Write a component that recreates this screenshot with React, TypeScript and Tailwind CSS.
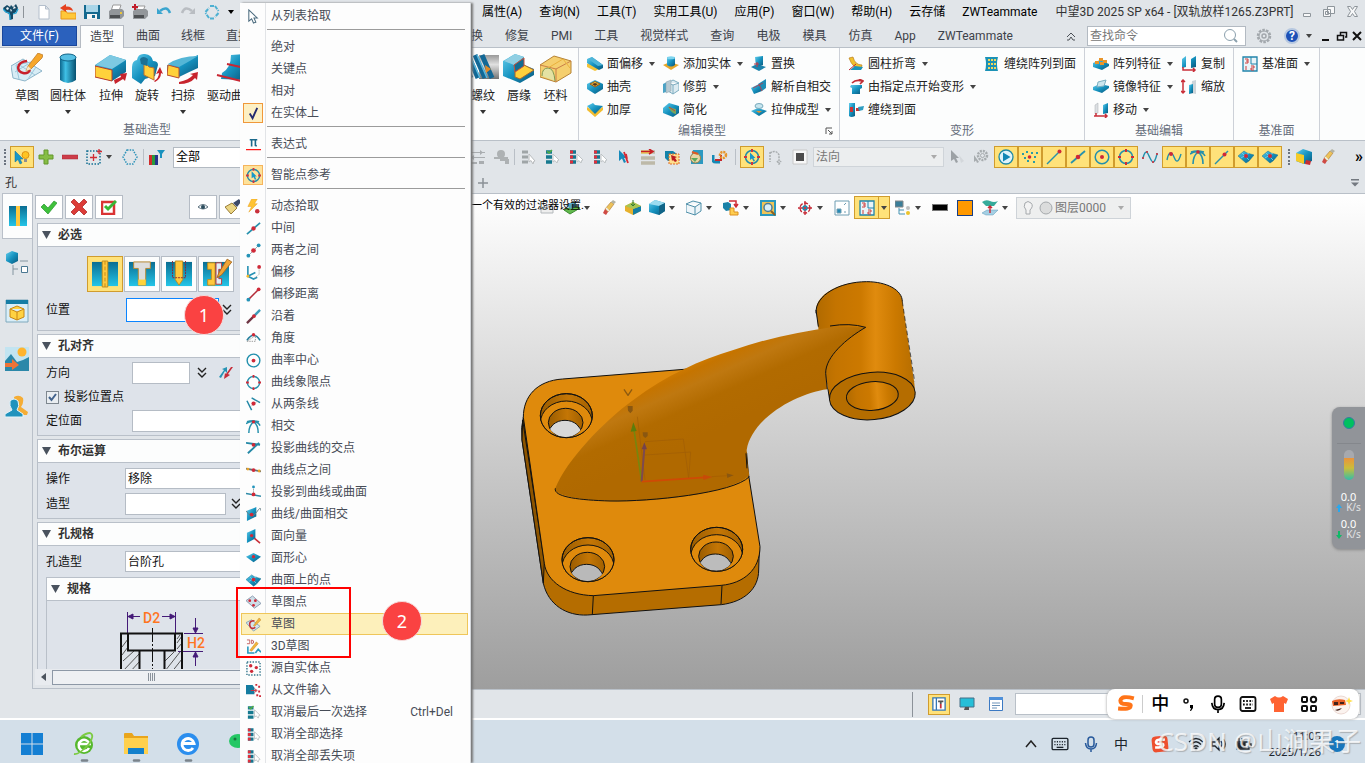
import type { ReactNode } from 'react';

// 16x16 glyphs shared by the toolbars, the ribbon and the pick menu
const glyphs: Record<string, ReactNode> = {
  logo: (
    <g>
      <path d="M0 4 4 1 7 3 8 1 10 3 13 0 15 4 13 8 10 10V15L7 16 6 10 2 8Z" fill="#174a66" />
      <path d="M4 3 6 4 5 6 3 5ZM11 2 13 4 10 5ZM7 5 9 6 8 8Z" fill="#f3f7f9" />
      <path d="M0 5 3 8 6 9 7 12V16M15 5 13 9 10 10" fill="none" stroke="#21a4d6" strokeWidth="1.300" />
    </g>
  ),
  page: <path d="M3 1.500H9.500L13 5V15H3ZM9.500 1.500V5H13" fill="#fff" stroke="#b4bfcc" />,
  open: (
    <g>
      <path d="M1 7H6L7 9H16V15H1Z" fill="#ffc839" stroke="#e8961b" />
      <path d="M0 4 6 0V2.500Q12 2 13 7 9 5 6 6V8Z" fill="#e5401e" />
    </g>
  ),
  save: (
    <g>
      <path d="M0 1H16V15H0Z" fill="#14698f" />
      <path d="M2 1H14V8H2Z" fill="#a9d5e8" />
      <path d="M3 10H13V15H3Z" fill="#f5f5f5" />
      <path d="M8 11H11V14H8Z" fill="#14698f" />
    </g>
  ),
  print: (
    <g>
      <path d="M5 1H13L11 7H3Z" fill="#fff" stroke="#999" />
      <path d="M1 7 4 5H14L16 7V12L13 15H1Z" fill="#92969a" />
      <path d="M2 11H12V14H2Z" fill="#4d5053" />
      <path d="M12 8H14V10H12Z" fill="#e9c63c" />
    </g>
  ),
  printPlus: (
    <g>
      <path d="M6 2H13L11 7H4Z" fill="#fff" stroke="#999" />
      <path d="M1 7 4 5H14L16 7V12L13 15H1Z" fill="#92969a" />
      <path d="M2 11H12V14H2Z" fill="#4d5053" />
      <path d="M3 0V6M0 3H6" stroke="#c11d2b" strokeWidth="2" />
    </g>
  ),
  undo: (
    <g>
      <path d="M4 7Q11 1 14 9" fill="none" stroke="#3aa5cf" strokeWidth="2.500" />
      <path d="M1 4V10H7Z" fill="#3aa5cf" />
    </g>
  ),
  redo: (
    <g>
      <path d="M12 7Q5 1 2 9" fill="none" stroke="#b9bdc2" strokeWidth="2.500" />
      <path d="M15 4V10H9Z" fill="#b9bdc2" />
    </g>
  ),
  rotateBox: (
    <g fill="none" stroke="#4db0d2" strokeWidth="2">
      <path d="M1.500 8 5 4M6 2H11M11 2 14.500 7M14.500 9 11 13M10 14.500H5M5 14 1.500 9" strokeDasharray="4 1" />
    </g>
  ),
  pickBulb: (
    <g>
      <path d="M1 2V13L4 10.500 6 15 8 14 6 10H9Z" fill="#1798c8" stroke="#0f6f98" strokeWidth=".5" />
      <circle cx="11.500" cy="6" r="3.500" fill="#ffc421" stroke="#df9313" />
      <path d="M10 10H13V13H10Z" fill="#8f8f8f" />
    </g>
  ),
  plus: <path d="M6 1H10V6H15V10H10V15H6V10H1V6H6Z" fill="#86bd45" stroke="#62972c" />,
  minus: <path d="M0 6H16V10H0Z" fill="#cd3c49" stroke="#a82936" strokeWidth=".5" />,
  marquee: (
    <g fill="none">
      <path d="M1 2H14V15H1Z" stroke="#156f93" strokeDasharray="1.500 1.500" strokeWidth="1.500" />
      <path d="M7.500 5V12M4 8.500H11M13 0V5M11 2.500H16" stroke="#d12d35" strokeWidth="1.300" />
    </g>
  ),
  hexagon: <path d="M5 1H11L15 8 11 15H5L1 8Z" fill="none" stroke="#2b91b8" strokeWidth="1.500" strokeDasharray="1.500 1.200" />,
  filter: (
    <g>
      <path d="M0 6H3V16H0Z" fill="#d02c2c" />
      <path d="M3 6H6V16H3Z" fill="#2a9a3c" />
      <path d="M6 6H9V16H6Z" fill="#27348b" />
      <path d="M8 1H16L13 5V9H11V5Z" fill="#1992bf" />
    </g>
  ),
  listGrey: (
    <g>
      <path d="M2 3H8M2 8H8M2 13H8" stroke="#9fa5a7" strokeWidth="3" />
      <path d="M9 5V13L11 11.500 13 15 14 12H15Z" fill="#fff" stroke="#b9bcbe" />
    </g>
  ),
  listTeal: (
    <g>
      <path d="M2 3H8M2 8H8M2 13H8" stroke="#16798f" strokeWidth="3.500" />
      <path d="M3 2 5 4 8 1" stroke="#52ad45" fill="none" strokeWidth="1.500" />
      <path d="M9 5V13L11 11.500 13 14 14 11H15Z" fill="#fff" stroke="#bec3c5" />
    </g>
  ),
  listRed: (
    <g>
      <path d="M2 3H8M2 8H8M2 13H8" stroke="#17758f" strokeWidth="3.500" />
      <path d="M2 3H5M2 8H5M2 13H5" stroke="#e0303c" strokeWidth="3" />
      <path d="M9 5V13L11 11.500 13 14 14 11H15Z" fill="#fff" stroke="#bec3c5" />
    </g>
  ),
  cursorRed: (
    <g>
      <path d="M3 1V12L6 9.500 8 14 10 13 8 9H11Z" fill="#168abb" />
      <path d="M8 3 12 14M10 5 11 10" stroke="#d72b35" strokeWidth="1.800" />
    </g>
  ),
  layers: (
    <g>
      <path d="M1 3H15M1 9H15M1 14H15" stroke="#bdb9a8" strokeWidth="3.500" />
      <path d="M1 3H12" stroke="#f1d34f" strokeWidth="3" />
      <path d="M1 2.500H12M9 0 13 2.500 9 5" stroke="#c72026" fill="none" strokeWidth="1.500" />
    </g>
  ),
  boxPick: (
    <g>
      <path d="M1 2H9L13 5V12H4L1 9Z" fill="#1383aa" />
      <path d="M5 5H15V15H5Z" fill="#ffdf8d" stroke="#e06b24" strokeDasharray="2 1" />
      <path d="M7 6 13 8 11 9 13 12 11 13 9 11 8 12Z" fill="#ba1c23" />
    </g>
  ),
  palette: (
    <g>
      <path d="M5 1H15V15H3V8Z" fill="#2c99c1" />
      <circle cx="7.500" cy="9" r="5" fill="#e7d5a5" stroke="#9c8347" />
      <path d="M3 9H10L7 13Z" fill="#5ca85d" />
      <path d="M4 3 10 5" stroke="#df5b23" strokeWidth="2" />
    </g>
  ),
  gearArrow: (
    <g fill="none">
      <path d="M1 6V11Q1 13 4 13H8" stroke="#1589b5" strokeWidth="3" />
      <path d="M3 11H9V6" stroke="#c7282c" strokeWidth="2" />
      <circle cx="11" cy="6" r="3" stroke="#e7962a" strokeWidth="2.500" strokeDasharray="2 .800" />
    </g>
  ),
  smartPick: (
    <g>
      <circle cx="8" cy="8" r="6.500" fill="none" stroke="#1e8bac" strokeWidth="1.500" />
      <path d="M8 0V3M8 13V16M0 8H3M13 8H16" stroke="#cf3540" strokeWidth="2" />
      <path d="M6 3.500V11L8 9.500 9.500 12.500 11 12 9.500 9H11.500Z" fill="#1798c8" />
    </g>
  ),
  hookGrey: <path d="M2 3V13M2 4Q8 0 11 6V14M9 12 11 15 13 12" fill="none" stroke="#a8adaf" strokeWidth="1.500" strokeDasharray="2 1" />,
  squareDark: (
    <g>
      <path d="M1 1H15V15H1Z" fill="#f7f7f7" stroke="#c8c8c8" />
      <path d="M4 4H12V12H4Z" fill="#4c4c4c" />
    </g>
  ),
  cursorGrey: (
    <g>
      <path d="M2 1V12L5 10 7 14 9 13 7 9H10Z" fill="#9ca1a5" />
      <path d="M10 6 15 12 12 14Z" fill="#d3d7db" />
    </g>
  ),
  gearGrey: (
    <g fill="none">
      <circle cx="9.500" cy="6.500" r="4.500" stroke="#a7acaf" strokeWidth="2.500" strokeDasharray="2 1" />
      <circle cx="9.500" cy="6.500" r="2" stroke="#a7acaf" />
      <path d="M1 6V13L3 11.500 4 14 6 13Z" fill="#a7acaf" />
    </g>
  ),
  play: (
    <g>
      <circle cx="8" cy="8" r="7" fill="#dff3fa" stroke="#1f89a7" strokeWidth="1.300" />
      <path d="M5 3.500 12.500 8 5 12.500Z" fill="#1187b5" />
    </g>
  ),
  points: (
    <g fill="#299ba6">
      <path d="M0 4H2V6H0ZM4 2H6V4H4ZM9 3H11V5H9ZM14 3H16V5H14ZM2 8H4V10H2ZM12 7H14V9H12ZM5 11H7V13H5ZM11 12H13V14H11Z" />
      <circle cx="7.500" cy="8" r="1.800" fill="#cf2938" />
    </g>
  ),
  lineEnd: (
    <g>
      <path d="M1 15 14 2" stroke="#2991a9" strokeWidth="1.500" />
      <circle cx="13.500" cy="2.500" r="2" fill="#cf2938" />
    </g>
  ),
  lineMid: (
    <g>
      <path d="M1 14 15 2" stroke="#2791ad" strokeWidth="1.800" />
      <circle cx="8" cy="8" r="2.300" fill="#cf2938" />
    </g>
  ),
  lineOn: (
    <g>
      <path d="M1 15 14 2" stroke="#2991a9" strokeWidth="1.500" />
      <circle cx="10.500" cy="5.500" r="2" fill="#cf2938" />
    </g>
  ),
  circleCenter: (
    <g>
      <circle cx="8" cy="8" r="6.800" fill="none" stroke="#2290ad" strokeWidth="1.500" />
      <circle cx="8" cy="8" r="2" fill="#cf2938" />
    </g>
  ),
  quadrant: (
    <g>
      <circle cx="8" cy="8" r="6.500" fill="none" stroke="#2290ad" strokeWidth="1.500" />
      <path d="M7 0H9V3H7ZM7 13H9V16H7ZM0 7H3V9H0ZM13 7H16V9H13Z" fill="#cf2938" />
    </g>
  ),
  wave: (
    <g>
      <path d="M1 9C4-2 6 5 8 9S12 17 15 5" fill="none" stroke="#2290ad" strokeWidth="1.400" />
      <path d="M0 8H2V10H0ZM4 2H6V4H4ZM10 12H12V14H10ZM14 4H16V6H14Z" fill="#b94a57" />
    </g>
  ),
  curve: (
    <g>
      <path d="M1 11C3 1 6 3 8 8S12 15 15 5" fill="none" stroke="#2290ad" strokeWidth="1.400" />
      <circle cx="5" cy="5" r="2" fill="#cf2938" />
    </g>
  ),
  tangent: (
    <g>
      <path d="M0 5Q5 2 8 3 13 3 15 7M1 3Q7 1 14 3M3 15Q3 7 8 3 13 6 13 15" fill="none" stroke="#2791ad" strokeWidth="1.600" />
      <circle cx="8" cy="3" r="1.800" fill="#cf2938" />
    </g>
  ),
  surfPoint: (
    <g>
      <path d="M0 7 6 2 9 4 16 6 11 12 8 14Z" fill="url(#cyan)" stroke="#12708f" strokeWidth=".5" />
      <path d="M4 4 11 11M3 9 11 4" stroke="#7cd4ee" strokeWidth=".8" />
      <circle cx="8" cy="7" r="2" fill="#cf2938" />
    </g>
  ),
  surface: (
    <g>
      <path d="M0 6 8 2 16 6 8 12Z" fill="url(#cyan)" />
      <circle cx="8" cy="6" r="1.800" fill="#cf2938" />
    </g>
  ),
  cubeGold: (
    <g>
      <path d="M0 4 7 0 16 3V12L8 15 0 12Z" fill="url(#cyan)" />
      <path d="M0 4 8 6V15L0 12Z" fill="#f5cb28" />
      <path d="M10 11 15 12 14 16 9 15Z" fill="#c92c31" />
    </g>
  ),
  pencil: (
    <g>
      <path d="M4 9 10 2 13 4 7 12Z" fill="#edc35a" stroke="#aa7735" strokeWidth=".6" />
      <path d="M4 9 7 12 5 15 2 13Z" fill="#cf4a44" />
      <path d="M5 8 8 11" stroke="#eee" strokeWidth="1.500" />
      <path d="M10 2 12 0 15 2 13 4Z" fill="#b3b3a4" />
    </g>
  ),
  cursor: <path d="M3 1V13L6 10.500 8 15 10.500 14 8.500 9.500H12Z" fill="#fff" stroke="#4b6b7e" strokeWidth="1.100" />,
  check: <path d="M4 8 7 13 12 2" fill="none" stroke="#252c70" strokeWidth="2" />,
  pi: (
    <g fill="none">
      <path d="M4 3H12M6 3V10M10 3V9L11.500 9.500" stroke="#1c6a8b" strokeWidth="1.700" />
      <path d="M0 13.500H16" stroke="#f00" strokeWidth="1.200" />
    </g>
  ),
  bolt: (
    <g>
      <path d="M6 0H12L9 5H12L3 14 6 8H2Z" fill="#ffc332" stroke="#e69c20" strokeWidth=".5" />
      <circle cx="12" cy="13" r="2.400" fill="#c9303b" />
    </g>
  ),
  between: (
    <g>
      <path d="M2 14 14 2" stroke="#90a9b0" />
      <circle cx="2.500" cy="13.500" r="2" fill="#2493b7" />
      <circle cx="8" cy="8" r="2.500" fill="#cf2938" />
      <circle cx="13.500" cy="2.500" r="2" fill="#2493b7" />
    </g>
  ),
  offset: (
    <g fill="none">
      <path d="M2 1V12L8 15 12 13M2 12 10 8" stroke="#2590b3" strokeWidth="1.700" />
      <path d="M14 3V10L9 14" stroke="#999" strokeDasharray="1 1" />
      <circle cx="14" cy="2" r="2" fill="#cf2938" />
      <circle cx="2" cy="12" r="1.500" fill="#efb62b" />
    </g>
  ),
  offsetDist: (
    <g>
      <path d="M2 14 14 2" stroke="#b32c39" strokeWidth="1.600" />
      <circle cx="2.500" cy="13.500" r="2" fill="#2493b7" />
      <circle cx="13.500" cy="2.500" r="2" fill="#cf2938" />
    </g>
  ),
  along: (
    <g>
      <path d="M1 15 9 7" stroke="#6f3644" strokeWidth="2.500" />
      <path d="M9 7 15 1" stroke="#3d9cb9" strokeWidth="2.500" />
      <circle cx="8.500" cy="7.500" r="2" fill="#cf2938" />
    </g>
  ),
  angle: (
    <g fill="none">
      <path d="M1 10Q8-1 15 10" stroke="#267f9c" strokeWidth="1.800" />
      <path d="M1 11H10V5Z" stroke="#999" strokeDasharray="1.500 1" />
      <circle cx="8" cy="4" r="1.800" fill="#cf2938" />
    </g>
  ),
  twoLines: (
    <g>
      <path d="M1 4 6 14M6 1 15 6" stroke="#2488a6" strokeWidth="1.600" />
      <path d="M5 10 13 4" stroke="#999" strokeDasharray="1 1" />
      <circle cx="8" cy="7" r="2.200" fill="#cf2938" />
    </g>
  ),
  project: (
    <g>
      <path d="M0 2 15 4M14 2 2 13" stroke="#2488a6" strokeWidth="2" />
      <circle cx="8" cy="4" r="2" fill="#cf2938" />
    </g>
  ),
  segment: (
    <g>
      <path d="M0 6 16 9" stroke="#627278" strokeWidth="2" />
      <circle cx="2" cy="6.500" r="1.500" fill="#e9a329" />
      <circle cx="8" cy="7.500" r="2" fill="#cf2938" />
      <circle cx="14" cy="8.500" r="1.500" fill="#e9a329" />
    </g>
  ),
  dropTo: (
    <g>
      <path d="M0 9 16 12" stroke="#2f8ba7" strokeWidth="1.700" />
      <path d="M8 2V10" stroke="#777" strokeDasharray="1 1" />
      <circle cx="8" cy="2" r="1.500" fill="#2294bc" />
      <circle cx="8" cy="10" r="2" fill="#cf2938" />
    </g>
  ),
  planeCurve: (
    <g>
      <path d="M1 4 11 0V10L1 15Z" fill="url(#cyan)" />
      <path d="M0 4Q6 14 11 6T16 4" fill="none" stroke="#647e86" />
      <circle cx="6" cy="8" r="2" fill="#cf2938" />
    </g>
  ),
  planeVec: (
    <g>
      <path d="M1 4 10 0V10L1 15Z" fill="url(#cyan)" />
      <path d="M9 10 15 15" stroke="#c92e39" strokeWidth="1.700" />
      <circle cx="6" cy="7" r="1.800" fill="#cf2938" />
    </g>
  ),
  sketchPts: (
    <g>
      <path d="M0 6 7 1 16 9 9 14Z" fill="#cfdde7" stroke="#8b9cb0" />
      <circle cx="4" cy="6" r="1.500" fill="#cf2938" />
      <circle cx="10" cy="6" r="1.500" fill="#cf2938" />
      <circle cx="8" cy="11" r="1.500" fill="#cf2938" />
    </g>
  ),
  sketch: (
    <g>
      <path d="M0 6 6 3 15 10 8 15Z" fill="#d4e5ee" stroke="#89a4b4" />
      <path d="M9 4Q3 4 4 9T10 11" fill="none" stroke="#c2313a" strokeWidth="1.700" />
      <path d="M8 9 14 1 16 3 9 10Z" fill="#f4b43a" stroke="#b88222" strokeWidth=".5" />
    </g>
  ),
  sketch3d: (
    <g>
      <path d="M2 8V15H9M10 15 13 11 16 14" fill="none" stroke="#2698be" strokeWidth="1.700" />
      <path d="M4 12 11 3 13 5 6 13Z" fill="#f4b43a" stroke="#b88222" strokeWidth=".5" />
      <path d="M1 1H4V5H1M6 1V5Q9 5 8 2Z" fill="none" stroke="#c56363" />
    </g>
  ),
  fromEntity: (
    <g>
      <path d="M1 1H15V15H1Z" fill="none" stroke="#36788d" strokeWidth="1.500" strokeDasharray="1.500 1.500" />
      <circle cx="5" cy="5" r="1.800" fill="#cf2938" />
      <circle cx="11" cy="7" r="1.800" fill="#cf2938" />
      <circle cx="6" cy="11" r="1.800" fill="#cf2938" />
    </g>
  ),
  fromFile: (
    <g>
      <path d="M0 2H7L9 5V12H0Z" fill="#157ca0" />
      <path d="M5 8H11M9 6 12 8 9 10" fill="none" stroke="#cb3440" />
      <path d="M10 1H12V3H10ZM13 3H15V5H13ZM13 8H15V10H13ZM11 12H13V14H11ZM14 13H16V15H14Z" fill="#cf2938" />
    </g>
  ),
  faceOffset: (
    <g>
      <path d="M0 8 7 4 16 11 8 15 0 11Z" fill="#f4c337" />
      <path d="M0 3 5 1 16 9V12L12 14 0 7Z" fill="url(#cyan)" />
      <path d="M5 1 16 9 11 10 1 3Z" fill="#4fb5d8" />
    </g>
  ),
  shell: (
    <g>
      <path d="M0 5 8 1 16 5V10L8 15 0 10Z" fill="url(#cyan)" />
      <path d="M3 5 8 2.500 13 5 8 8Z" fill="#f7cf43" stroke="#9a5b17" />
      <path d="M5 5 8 4 11 5 8 7Z" fill="#57321a" />
    </g>
  ),
  thicken: (
    <g>
      <path d="M0 5 8 10 16 5V8L8 15 0 8Z" fill="#f2bd31" />
      <path d="M0 4 6 1 8 3 16 4 8 12Z" fill="url(#cyan)" />
    </g>
  ),
  addSolid: (
    <g>
      <path d="M0 9 7 6 16 9 8 14Z" fill="#e7a72a" />
      <path d="M4 1H12V9Q8 12 4 9Z" fill="url(#cyan)" />
      <ellipse cx="8" cy="1.800" rx="4" ry="1.500" fill="#7ed4ee" />
    </g>
  ),
  trim: (
    <g>
      <path d="M0 5 6 2V12L0 14Z" fill="#4aa3c6" />
      <path d="M5 4 10 1 16 4V11L10 15 5 12ZM5 4 10 6 16 4M10 6V15" fill="#dcebf1" stroke="#7dacbf" />
      <path d="M3 3 8 1V12L3 14Z" fill="#b7c9d1" stroke="#8aa3ad" strokeWidth=".5" />
    </g>
  ),
  simplify: (
    <g>
      <path d="M0 6 6 1 16 4V11L10 15 0 11Z" fill="url(#cyan)" />
      <path d="M5 5 13 7V12Q9 12 5 5Z" fill="#79a55d" />
      <path d="M6 5 12 9" stroke="#bf493e" />
    </g>
  ),
  replace: (
    <g>
      <path d="M0 11 6 8 15 11 8 15Z" fill="#1c82ab" />
      <path d="M4 1 12 0V9L5 11Z" fill="url(#cyan)" />
      <path d="M3 8H8M6 6V11" stroke="#c53441" />
    </g>
  ),
  selfX: (
    <g>
      <path d="M7 5 15 0V9L11 12Z" fill="#1f8db5" />
      <path d="M0 9 8 5 11 12 3 15Z" fill="url(#cyan)" />
      <path d="M2 9 12 4M8 5 11 12" stroke="#c53441" strokeWidth=".8" />
    </g>
  ),
  extrudeForm: (
    <g>
      <path d="M0 9 7 6 16 9 8 14Z" fill="url(#cyan)" />
      <ellipse cx="8" cy="4" rx="4" ry="2.500" fill="#c7e6ef" stroke="#78a9bb" />
      <path d="M5 9H11L8 11Z" fill="#df9331" />
    </g>
  ),
  bend: (
    <g>
      <path d="M1 2 5 1Q7 9 14 9L13 13Q5 13 1 2Z" fill="#f2c12d" stroke="#b97c1c" strokeWidth=".7" />
      <path d="M2 14 7 10 15 11 13 14Z" fill="#1b93bb" />
      <path d="M1 14 8 8" fill="none" stroke="#c42a33" />
    </g>
  ),
  morph: (
    <g>
      <path d="M3 6H14V9L12 10V15H4V9L2 8Z" fill="url(#cyan)" />
      <path d="M4 4Q8 0 14 2M11 0 15 2 12 5" fill="none" stroke="#c12e36" strokeWidth="1.700" />
    </g>
  ),
  wrap: (
    <g>
      <path d="M1 1H7V14Q3 16 1 14Z" fill="url(#cyan)" />
      <path d="M2 5H5V10H2ZM8 6H12V9H8Z" fill="#cc3536" />
      <path d="M10 5 16 4 15 8 11 9Z" fill="#2e9cc0" />
    </g>
  ),
  wrapPattern: (
    <g>
      <path d="M1 1H14Q12 8 14 15H1Q3 8 1 1Z" fill="#1b92b6" />
      <path d="M4 3H6V5H4ZM7 3H9V5H7ZM10 3H12V5H10ZM4 7H6V9H4ZM7 7H9V9H7ZM10 7H12V9H10ZM4 11H6V13H4ZM7 11H9V13H7ZM10 11H12V13H10Z" fill="#f2d65d" />
    </g>
  ),
  patternFeat: (
    <g>
      <path d="M0 7 7 4 16 8V10L9 14 0 11Z" fill="url(#cyan)" />
      <path d="M2 5H6V8H2ZM6 2H10V5H6ZM7 6H11V9H7ZM10 4H14V7H10Z" fill="#e8952b" />
    </g>
  ),
  mirrorFeat: (
    <g>
      <path d="M0 8 7 5 16 7V9L9 14 0 11Z" fill="url(#cyan)" />
      <path d="M5 3 13 1 11 7 4 8Z" fill="#cbe6ef" stroke="#7cafc1" />
    </g>
  ),
  move: (
    <g>
      <path d="M2 3 5 1V11L2 12Z" fill="#dce0e3" stroke="#a8adb0" strokeWidth=".5" />
      <path d="M10 3 15 1V11L10 12Z" fill="url(#cyan)" />
      <path d="M1 14H14M3 11V14M12 12 14 14 12 16" fill="none" stroke="#c92e39" strokeWidth="1.500" />
    </g>
  ),
  copy: (
    <g>
      <path d="M1 3 5 0V11L1 12ZM10 3 15 0V11L10 12Z" fill="url(#cyan)" />
      <path d="M2 11V14H14M12 12 14 14 12 16" fill="none" stroke="#c92e39" strokeWidth="1.500" />
    </g>
  ),
  scale: (
    <g>
      <path d="M2 1V14M0 3 2 1 4 3M0 12 2 14 4 12" fill="none" stroke="#c92e39" strokeWidth="1.500" />
      <path d="M11 2 15 1V15L10 14Z" fill="#cdd5da" />
      <path d="M8 6 12 5V14L8 15Z" fill="url(#cyan)" />
    </g>
  ),
  datum: (
    <g fill="none">
      <path d="M1 1H15V15H1Z" fill="#e9f4f8" stroke="#2184aa" strokeWidth="1.300" />
      <path d="M9 1V8H15" stroke="#2184aa" />
      <path d="M3 3H6V7H3M4 5H6M4 10V14M9 10H12V12H9V14H12" stroke="#cf3b3b" />
    </g>
  ),
  padGhost: <path d="M1 9H7V5H13V13H1Z" fill="#eee" stroke="#b3b8bb" />,
  pad: (
    <g>
      <path d="M0 10 10 6 16 8 6 14Z" fill="#62b94c" stroke="#3c8c32" />
      <path d="M2 5 9 2 14 5 7 9Z" fill="#55a4c5" />
    </g>
  ),
  cubeLayer: (
    <g>
      <path d="M0 6 8 2 16 6V11L8 15 0 11Z" fill="#e6b12d" />
      <path d="M8 9 16 6V11L8 15Z" fill="#137ea5" />
      <path d="M0 6 8 2 16 6 8 9Z" fill="#a7c653" />
      <path d="M8 0V6M6 4 8 6 10 4" stroke="#357a32" fill="none" />
    </g>
  ),
  cube: (
    <g>
      <path d="M0 4 6 0 16 3V11L10 15 0 12Z" fill="url(#cyan)" />
      <path d="M0 4 6 0 16 3 10 6Z" fill="#9ddcf0" />
      <path d="M10 6 16 3V11L10 15Z" fill="#106487" />
    </g>
  ),
  cubeWire: <path d="M0 4 7 1 15 3V11L9 15 0 12ZM0 4 9 7 15 3M9 7V15" fill="#eef5f9" stroke="#4f8fa9" />,
  swapView: (
    <g>
      <path d="M0 3 5 2 8 4V10L3 11 0 8Z" fill="#1b82a8" />
      <path d="M6 1H13V6M11 4 13 7 15 4" fill="none" stroke="#cf2d35" strokeWidth="1.500" />
      <path d="M7 8H11V12H15V15H7Z" fill="#ffce50" stroke="#dd9020" />
    </g>
  ),
  zoomBox: (
    <g>
      <path d="M0 0H16V16H0Z" fill="#2a98be" />
      <path d="M2 2H14V14H2Z" fill="#f0c457" />
      <circle cx="8" cy="7.500" r="4" fill="#d8eef7" stroke="#4f7e94" strokeWidth="1.500" />
      <path d="M11 11 15 15" stroke="#8d5f21" strokeWidth="2" />
    </g>
  ),
  target: (
    <g fill="none" stroke="#c52935" strokeWidth="1.300">
      <circle cx="8" cy="8" r="5" strokeDasharray="4 1.500" />
      <path d="M8 1V15M1 8H15" />
      <circle cx="8" cy="8" r="2" stroke="#168bb2" />
    </g>
  ),
  windowBox: (
    <g fill="#fff" stroke="#6f9db2">
      <path d="M1 1H15V15H1Z" />
      <path d="M3 9H7V13H3Z" fill="#2689b4" />
      <path d="M10 5 12 3M10 12H12" />
    </g>
  ),
  tree: (
    <g>
      <path d="M0 1H8V7H0Z" fill="#3b7e99" stroke="#888" />
      <path d="M4 8V14H10M4 10H9" fill="none" stroke="#4693b2" />
      <circle cx="13" cy="8" r="2" fill="#c0c0c0" />
      <circle cx="13" cy="13" r="2" fill="#edc32a" />
    </g>
  ),
  section: (
    <g>
      <path d="M0 2Q4-1 8 1T16 1L12 6H4Z" fill="#37ab9b" />
      <path d="M0 13 5 10H16L11 15H4Z" fill="#a5cfe4" stroke="#5c9ab8" strokeWidth=".5" />
      <path d="M8 6V13M6 8 8 6 10 8" fill="none" stroke="#c92e39" strokeWidth="1.500" />
    </g>
  ),
  slider: (
    <g fill="#a9adb0">
      <path d="M0 3H16V4H0ZM0 8H16V9H0ZM0 13H8V15H0ZM10 12H15V15H10Z" />
      <path d="M11 1 14 3.500 11 6ZM5 6 2 8.500 5 11Z" />
    </g>
  ),
  stamp: (
    <g fill="#adb1b3">
      <circle cx="8" cy="5" r="4" />
      <path d="M1 8H15V10H1ZM7 10H16V15H12V12H7Z" />
    </g>
  ),
  gear: (
    <g fill="none" stroke="#a3a8ad">
      <circle cx="8" cy="8" r="6" strokeWidth="2.500" strokeDasharray="2.500 1.200" />
      <circle cx="8" cy="8" r="5" />
      <circle cx="8" cy="8" r="2" strokeWidth="1.500" />
    </g>
  ),
  swapDir: (
    <g>
      <path d="M1 12 6 5 4 4 9 2 9 8 7 6 3 13Z" fill="#2794b5" />
      <path d="M15 2 10 9 12 10 6 14 7 8 8 9 13 2Z" fill="#c62c38" />
    </g>
  ),
  chevrons: <path d="M4 3 8 7 12 3M4 8 8 12 12 8" fill="none" stroke="#222" strokeWidth="1.400" />,
  eye: (
    <g>
      <path d="M3 8Q8 3 13 8 8 12 3 8Z" fill="#eef4f7" stroke="#5e7380" />
      <circle cx="8" cy="8" r="2" fill="#2b4b5c" />
    </g>
  ),
  mic: <path d="M8 1Q5 1 5 4V8Q5 11 8 11T11 8V4Q11 1 8 1ZM2.500 7Q3 13 8 13T13.500 7M8 13V16" fill="none" stroke="currentColor" strokeWidth="1.500" />,
  keyboard: (
    <g fill="none" stroke="currentColor" strokeWidth="1.200">
      <rect x="1" y="3" width="14" height="10" rx="1" />
      <path d="M3 6H13M3 8.500H13" strokeDasharray="1 1.200" />
      <path d="M5 11H11" />
    </g>
  ),
  sogou: (
    <path d="M15 3Q4 0 3 5 3 8 8 8T12 10Q12 13 1 12" fill="none" stroke="currentColor" strokeWidth="3.500" />
  ),
};

// 32x32 pictures of the large ribbon buttons
const pictures: Record<string, ReactNode> = {
  sketch: (
    <g>
      <path d="M0 13 12 6 31 18 14 28 2 25Z" fill="#d8edf6" stroke="#8db5c9" />
      <path d="M7 11 24 22M8 26 5 12 20 9M17 26 25 14M4 19 17 11" stroke="#9bc7db" fill="none" />
      <path d="M16 8C5 9 5 19 12 20Q17 21 19 17" fill="none" stroke="#c8202b" strokeWidth="2.500" />
      <path d="M17 13 27 0 32 2 31 5 20 16 15 18Z" fill="#f6a72b" stroke="#b67322" strokeWidth=".7" />
      <path d="M17 13 20 16 15 18Z" fill="#f6e4c8" />
    </g>
  ),
  cylinder: (
    <g>
      <path d="M8 4V27Q16 33 24 27V4Z" fill="url(#drum)" />
      <ellipse cx="16" cy="4.500" rx="8" ry="3.500" fill="#55bfe3" stroke="#0f6286" />
    </g>
  ),
  extrude: (
    <g>
      <path d="M0 12 15 2 31 7V19L17 28 0 24Z" fill="url(#cyan)" />
      <path d="M0 13 17 17V28L0 24Z" fill="#ffd23b" stroke="#bb3c2a" />
      <path d="M1 12 15 2 31 7 17 16Z" fill="#7dc9e2" />
      <path d="M19 27 26 24 25 21 32 20 30 28 28 26 20 31Z" fill="#c7242d" />
    </g>
  ),
  revolve: (
    <g>
      <path d="M1 14Q1 8 6 7 7 0 14 1T22 8Q27 8 27 12L24 23 14 26 10 31 1 25Z" fill="url(#cyan)" />
      <path d="M13 9 18 14 23 15V27L13 22Z" fill="#ffd13a" stroke="#bd712d" />
      <path d="M9 6Q12 2 17 6L16 13 10 11Z" fill="#1c7195" />
      <path d="M24 29Q30 26 30 20L32 21 29 14 25 21 28 20Q28 25 23 28Z" fill="#c7242d" />
    </g>
  ),
  sweep: (
    <g>
      <path d="M0 12 17 8 31 2V15Q22 19 12 24L0 22Z" fill="url(#cyan)" />
      <path d="M1 12 12 15V25L0 22Z" fill="#ffd13a" stroke="#bd4c2d" />
      <path d="M1 11Q13 3 31 3 23 8 12 14Z" fill="#54b6d6" />
      <path d="M12 29Q22 27 26 22L23 21 31 19 30 27 28 25Q23 31 12 31Z" fill="#c7242d" />
    </g>
  ),
  drive: (
    <g>
      <path d="M7 20Q16 15 16 2L30 1V27L6 26Z" fill="url(#cyan)" />
      <path d="M2 22 30 29M12 11 30 15" stroke="#c92733" strokeWidth="2" />
    </g>
  ),
  thread: (
    <g>
      <path d="M12 2H32V26H12Z" fill="url(#steel)" />
      <path d="M1 2 11 25M8 2 18 25M15 2 25 25M-5 5 4 25" stroke="#126896" strokeWidth="5" />
      <path d="M3 2 13 25M10 2 20 25" stroke="#57b8de" strokeWidth="1.500" />
      <path d="M18 12 24 16 19 20" fill="#e08a27" />
    </g>
  ),
  lip: (
    <g>
      <path d="M0 8 12 1 21 4V12L31 16V22L17 30 0 23Z" fill="url(#cyan)" />
      <path d="M12 18 21 12 31 17 17 26 12 24Z" fill="#ffd13c" stroke="#a9692c" />
      <path d="M1 8 12 1 21 4 11 12Z" fill="#90cfe3" />
      <path d="M11 12 21 5V13L12 19Z" fill="#146b91" stroke="#cc5138" />
    </g>
  ),
  stock: (
    <g>
      <path d="M0 12 14 3 31 8V20L16 29 0 24Z" fill="#f5cf6e" stroke="#b68335" />
      <path d="M0 12 16 16 31 8M16 16V29" fill="none" stroke="#c97f48" />
      <path d="M2 23Q2 15 8 15T15 28" fill="#e4e2a3" stroke="#7f9a55" />
      <path d="M8 15 23 6 30 15" fill="none" stroke="#e9b13c" />
    </g>
  ),
};

const Glyph = ({ name, className = 'size-4' }: { name: string; className?: string }) => (
  <svg viewBox="0 0 16 16" className={`shrink-0 ${className}`} aria-hidden="true">
    {glyphs[name]}
  </svg>
);

const Caret = ({ className = 'text-[#444]' }: { className?: string }) => (
  <svg viewBox="0 0 6 4" className={`h-1 w-1.5 shrink-0 ${className}`} aria-hidden="true">
    <path d="M0 0H6L3 4Z" fill="currentColor" />
  </svg>
);

const Divider = () => <span className="mx-px h-4 w-px bg-[#b9bfc6]" />;

const Grip = () => <span className="h-4 w-0.5 border-l-2 border-dotted border-[#6c7480]" />;

function ToolButton({ name, active = false }: { name: string; active?: boolean }) {
  return (
    <button
      type="button"
      aria-label={name}
      className={`flex h-[22px] w-6 shrink-0 items-center justify-center ${active ? 'border border-[#d09c2e] bg-[#ffe27a]' : ''}`}
    >
      <Glyph name={name} />
    </button>
  );
}

function TitleRow() {
  const menus = ['属性(A)', '查询(N)', '工具(T)', '实用工具(U)', '应用(P)', '窗口(W)', '帮助(H)', '云存储', 'ZWTeammate'];
  return (
    <header className="flex h-6 items-center">
      <div className="flex w-[482px] shrink-0 items-center pl-[3px]">
        <Glyph name="logo" />
        <span className="mr-3 ml-1 h-3 w-px bg-[#8d9399]" />
        <div className="flex items-center gap-2">
          {['page', 'open', 'save', 'print', 'printPlus', 'undo', 'redo', 'rotateBox'].map((n) => (
            <button type="button" key={n} aria-label={n}>
              <Glyph name={n} />
            </button>
          ))}
          <Caret className="text-black" />
        </div>
      </div>
      <nav className="flex gap-[17px] whitespace-nowrap text-black">
        {menus.map((m) => (
          <button type="button" key={m}>
            {m}
          </button>
        ))}
      </nav>
      <h1 className="ml-[18px] flex-1 whitespace-nowrap text-[#333]">中望3D 2025 SP x64 - [双轨放样1265.Z3PRT]</h1>
      <svg viewBox="0 0 60 14" className="mr-[5px] h-3.5 w-[60px] shrink-0" fill="#f7f8f9" stroke="#8e959b">
        <path d="M3.500 8.500H10.500V11.500H3.500ZM27.500 1.500H34.500V8.500H27.500ZM23.500 4.500H30.500V11.500H23.500ZM25.500 6.500H28.500V9.500H25.500Z" />
        <path d="M47.500 1.500H50.500L52.500 4.500 54.500 1.500H57.500L54.500 6.500 57.500 11.500H54.500L52.500 8.500 50.500 11.500H47.500L50.500 6.500Z" />
      </svg>
    </header>
  );
}

function TabRow() {
  const tabs = ['修复', 'PMI', '工具', '视觉样式', '查询', '电极', '模具', '仿真', 'App', 'ZWTeammate'];
  return (
    <nav className="flex h-[23px] items-center text-[#3d4249]">
      <div className="flex h-full w-[471px] shrink-0 items-center pl-0.5">
        <button type="button" className="h-5 w-[75px] border border-[#1a479c] bg-[#2b61bd] text-white">
          文件(F)
        </button>
        <button type="button" className="relative top-px ml-[3px] h-full w-11 border border-b-0 border-[#b5bbc3] bg-[#fcfdfd]">
          造型
        </button>
        <div className="flex gap-[21px] pl-3">
          <button type="button">曲面</button>
          <button type="button">线框</button>
          <button type="button">直接编辑</button>
        </div>
      </div>
      <button type="button" className="w-[34px] pr-[22px] text-left">
        换
      </button>
      <div className="flex flex-1 gap-[22px] whitespace-nowrap">
        {tabs.map((t) => (
          <button type="button" key={t}>
            {t}
          </button>
        ))}
      </div>
      <svg viewBox="0 0 10 10" className="mr-[11px] size-2.5" fill="none" stroke="#4c5157">
        <path d="M1 6 5 2 9 6M1 9H3L5 6 7 9H9" />
      </svg>
      <label className="mr-2 flex h-5 w-[159px] items-center border border-[#b3bac2] bg-white">
        <input type="text" placeholder="查找命令" aria-label="查找命令" className="min-w-0 flex-1 pl-0.5 outline-none placeholder:text-[#777]" />
        <svg viewBox="0 0 16 16" className="mr-1.5 size-4" fill="none" stroke="#8ba0ad">
          <circle cx="7" cy="7" r="5.500" />
          <path d="M11 11 14 14" strokeWidth="2" />
        </svg>
      </label>
      <button type="button" aria-label="设置" className="mx-0.5">
        <Glyph name="gear" />
      </button>
      <button type="button" className="mr-1.5 ml-2.5 flex size-4 items-center justify-center rounded-full border-2 border-[#b7c8e0] bg-[#1d51b8] font-bold text-white">
        ?
      </button>
      <Caret />
      <svg viewBox="0 0 44 12" className="mr-px ml-2 h-3 w-11" fill="none" stroke="#111" strokeWidth="2">
        <path d="M2 10H9M33 2 41 10M41 2 33 10" />
        <path d="M20.500 5V2.500H26.500V7H25M17.500 5.500H23.500V10H17.500Z" strokeWidth="1.500" />
      </svg>
    </nav>
  );
}

function BigButton({ label, pic, width, caret = true }: { label: string; pic: string; width: string; caret?: boolean }) {
  return (
    <button type="button" className={`flex shrink-0 flex-col items-center whitespace-nowrap ${width}`}>
      <svg viewBox="0 0 32 32" className="size-8 shrink-0">
        {pictures[pic]}
      </svg>
      <span className="mt-0.5 h-[18px] leading-[18px]">{label}</span>
      {caret && <Caret className="mt-[5px] text-[#333]" />}
    </button>
  );
}

function RibbonItem({ icon, label, caret = false }: { icon: string; label: string; caret?: boolean }) {
  return (
    <button type="button" className="flex h-[23px] items-center gap-1 whitespace-nowrap">
      <Glyph name={icon} />
      {label}
      {caret && <Caret className="ml-0.5 text-[#444]" />}
    </button>
  );
}

function RibbonGroup({ title, width, launcher = false, children }: { title: string; width: string; launcher?: boolean; children: ReactNode }) {
  return (
    <section className={`flex shrink-0 flex-col ${width}`}>
      <div className="flex h-[73px] shrink-0 pt-1 pl-2">{children}</div>
      <div className="flex h-5 shrink-0 items-center text-[#646c7a]">
        <span className="flex-1 text-center">{title}</span>
        {launcher && (
          <svg viewBox="0 0 8 8" className="mr-1.5 size-2" fill="none" stroke="#555">
            <path d="M1 7V1H7M3 3 7 7M7 4V7H4" />
          </svg>
        )}
      </div>
    </section>
  );
}

function Ribbon() {
  return (
    <div className="flex h-[94px] items-stretch border-t border-b border-[#b9c0c8] bg-[#fcfdfd] text-[#222]">
      <section className="flex w-[465px] shrink-0 flex-col overflow-hidden">
        <div className="flex h-[73px] pt-[5px] pl-[11px]">
          <BigButton label="草图" pic="sketch" width="w-8" />
          <BigButton label="圆柱体" pic="cylinder" width="w-[50px]" />
          <BigButton label="拉伸" pic="extrude" width="w-9" caret={false} />
          <BigButton label="旋转" pic="revolve" width="w-9" caret={false} />
          <BigButton label="扫掠" pic="sweep" width="w-9" />
          <BigButton label="驱动曲线" pic="drive" width="w-[60px]" caret={false} />
        </div>
        <div className="h-5 w-[294px] text-center leading-5 text-[#646c7a]">基础造型</div>
      </section>
      <div className="my-1 flex w-[113px] shrink-0 pt-px">
        <BigButton label="螺纹" pic="thread" width="w-9" />
        <BigButton label="唇缘" pic="lip" width="w-9" caret={false} />
        <BigButton label="坯料" pic="stock" width="w-[37px]" />
      </div>
      <div className="flex divide-x divide-[#cdd1d8] border-x border-[#cdd1d8]">
        <RibbonGroup title="编辑模型" width="w-[261px]" launcher>
          <div className="w-[76px]">
            <RibbonItem icon="faceOffset" label="面偏移" caret />
            <RibbonItem icon="shell" label="抽壳" />
            <RibbonItem icon="thicken" label="加厚" />
          </div>
          <div className="w-[88px]">
            <RibbonItem icon="addSolid" label="添加实体" caret />
            <RibbonItem icon="trim" label="修剪" caret />
            <RibbonItem icon="simplify" label="简化" />
          </div>
          <div>
            <RibbonItem icon="replace" label="置换" />
            <RibbonItem icon="selfX" label="解析自相交" />
            <RibbonItem icon="extrudeForm" label="拉伸成型" caret />
          </div>
        </RibbonGroup>
        <RibbonGroup title="变形" width="w-[245px]">
          <div className="w-[136px]">
            <RibbonItem icon="bend" label="圆柱折弯" caret />
            <RibbonItem icon="morph" label="由指定点开始变形" caret />
            <RibbonItem icon="wrap" label="缠绕到面" />
          </div>
          <div>
            <RibbonItem icon="wrapPattern" label="缠绕阵列到面" />
          </div>
        </RibbonGroup>
        <RibbonGroup title="基础编辑" width="w-[149px]">
          <div className="w-[88px]">
            <RibbonItem icon="patternFeat" label="阵列特征" caret />
            <RibbonItem icon="mirrorFeat" label="镜像特征" caret />
            <RibbonItem icon="move" label="移动" caret />
          </div>
          <div>
            <RibbonItem icon="copy" label="复制" />
            <RibbonItem icon="scale" label="缩放" />
          </div>
        </RibbonGroup>
        <RibbonGroup title="基准面" width="w-[85px]">
          <div>
            <RibbonItem icon="datum" label="基准面" caret />
          </div>
        </RibbonGroup>
      </div>
    </div>
  );
}

function SelectionBar() {
  return (
    <div className="flex h-8 items-center">
      <div className="flex w-[465px] shrink-0 items-center pl-1">
        <Grip />
        <span className="w-1" />
        <ToolButton name="pickBulb" active />
        <ToolButton name="plus" />
        <ToolButton name="minus" />
        <ToolButton name="marquee" />
        <Caret />
        <span className="w-1.5" />
        <ToolButton name="hexagon" />
        <Divider />
        <ToolButton name="filter" />
        <select aria-label="过滤器" className="ml-1 h-[21px] w-40 appearance-none border border-[#b3bac2] bg-white pl-0.5 text-black">
          <option>全部</option>
        </select>
      </div>
      <ToolButton name="slider" />
      <ToolButton name="stamp" />
      <Divider />
      {['listGrey', 'listTeal', 'listRed', 'listRed', 'cursorRed', 'layers', 'boxPick', 'palette', 'gearArrow'].map((n, i) => (
        <ToolButton key={i} name={n} />
      ))}
      <span className="w-0.5" />
      <Divider />
      <span className="w-[3px]" />
      <ToolButton name="smartPick" active />
      <ToolButton name="hookGrey" />
      <ToolButton name="squareDark" />
      <div className="mr-px ml-px flex h-5 w-[131px] shrink-0 items-center border border-[#cfd4d9] bg-[#eceeef] pr-1.5">
        <select disabled aria-label="方向" className="min-w-0 flex-1 appearance-none pl-0.5 text-[#777]">
          <option>法向</option>
        </select>
        <Caret className="text-[#aaa]" />
      </div>
      <ToolButton name="cursorGrey" />
      <ToolButton name="gearGrey" />
      <span className="w-px" />
      {['play', 'points', 'lineEnd', 'lineMid', 'circleCenter', 'quadrant'].map((n) => (
        <ToolButton key={n} name={n} active />
      ))}
      <ToolButton name="wave" />
      {['curve', 'tangent', 'lineOn', 'surfPoint', 'surfPoint'].map((n, i) => (
        <ToolButton key={i} name={n} active />
      ))}
      <span className="w-1.5" />
      <Grip />
      <span className="w-0.5" />
      <ToolButton name="cubeGold" />
      <ToolButton name="pencil" />
      <span className="ml-auto pr-0.5 text-base leading-4 font-bold text-black">»</span>
    </div>
  );
}

function TriangleHeader({ children }: { children: ReactNode }) {
  return (
    <h2 className="flex h-[23px] items-center gap-[7px] border-b border-[#b9c0c9] bg-[#fcfdfd] pl-1 font-bold text-[#333]">
      <svg viewBox="0 0 9 8" className="h-2 w-[9px]">
        <path d="M0 0H9L4.500 8Z" fill="#49525e" />
      </svg>
      {children}
    </h2>
  );
}

// cross sections shown on the four hole type buttons
const holeShapes: ReactNode[] = [
  <g>
    <path d="M11 0H17V28H11Z" fill="#ffc83d" stroke="#c18a1b" />
    <path d="M14 0V28" stroke="#c18a1b" strokeDasharray="4 2" />
  </g>,
  <g>
    <path d="M5 1H23V8H18V26H10V8H5Z" fill="#ddd" stroke="#b8862b" />
    <path d="M10 20H18V26H10Z" fill="#ffd43b" />
  </g>,
  <g>
    <path d="M10 0H18V20L14 26 10 20Z" fill="#ffc83d" stroke="#c18a1b" />
    <path d="M7 0V18H21V0" fill="none" stroke="#8d2433" strokeDasharray="2 1" />
  </g>,
  <g>
    <path d="M5 2H13V26H5V20H9V9H5Z" fill="#ffc83d" stroke="#c18a1b" />
    <path d="M14 2H20V9H17V19H20V25H14Z" fill="#dceefa" stroke="#c83030" />
    <path d="M17 13 26-2 31 1 20 15 15 18Z" fill="#f0a437" stroke="#a66b23" />
  </g>,
];

function HoleIcon({ index }: { index: number }) {
  return (
    <svg viewBox="0 0 28 28" className="size-[26px] overflow-visible">
      <path d="M0 1H28V27H0Z" fill="url(#hole)" />
      {holeShapes[index]}
    </svg>
  );
}

function SideTabs() {
  return (
    <div className="flex w-8 shrink-0 flex-col items-center pl-0.5">
      <button type="button" className="flex h-[46px] w-full items-center justify-center border border-r-0 border-[#b9c0c9] bg-[#fcfdfd]">
        <svg viewBox="0 0 20 20" className="size-5">
          <path d="M1 0H19V20H1Z" fill="url(#hole)" />
          <path d="M8 0H12V20H8Z" fill="#ffc83d" />
        </svg>
      </button>
      <button type="button" className="flex h-12 items-center">
        <svg viewBox="0 0 24 24" className="size-6">
          <path d="M1 3 7 0 13 2V10L7 13 1 10Z" fill="url(#cyan)" />
          <path d="M15 10H23M8 14V24M8 18H13" stroke="#8395a0" />
          <path d="M16.500 15.500H22.500V21.500H16.500Z" fill="#fff" stroke="#4b7892" />
        </svg>
      </button>
      <button type="button" className="flex h-12 items-center">
        <svg viewBox="0 0 24 24" className="size-6">
          <path d="M1 1H23V23H1Z" fill="#d9eef8" stroke="#7ea9bd" />
          <path d="M1 1H23V5H1Z" fill="#157da5" />
          <path d="M5 10 12 7 19 10V18L12 21 5 18ZM5 10 12 13 19 10M12 13V21" fill="#ffd242" stroke="#c88614" />
        </svg>
      </button>
      <button type="button" className="flex h-12 items-center">
        <svg viewBox="0 0 24 24" className="size-6">
          <path d="M0 0H24V24H0Z" fill="#c2e4f1" />
          <path d="M0 14 6 7 12 15 18 13 24 10V24H0Z" fill="#2b88a9" />
          <circle cx="17" cy="5" r="4.500" fill="#ffb42d" />
          <path d="M0 16H7V12L14 18 7 23V20H0Z" fill="#ee7336" />
        </svg>
      </button>
      <button type="button" className="flex h-12 items-center">
        <svg viewBox="0 0 24 24" className="size-6">
          <path d="M9 2Q14-1 18 3 19 8 16 12L23 17 22 20H10Z" fill="#f5ad35" />
          <path d="M5 6Q9 2 13 6 15 11 12 15L18 19V22H0V19L7 15Q4 11 5 6Z" fill="#2193bd" stroke="#e8f5fa" />
        </svg>
      </button>
    </div>
  );
}

function HoleDiagram() {
  return (
    <svg viewBox="0 0 90 64" className="ml-[73px] h-16 w-[90px] shrink-0 overflow-visible" fill="none">
      <g stroke="#451b78">
        <path d="M7.500 1V22M55.500 1V22M8 5.500H20M42 5.500H55M75.500 7V17M75.500 45V55M64 22.500H83M58 40.500H83" />
        <path d="M8 5.500 13 3V8ZM55 5.500 50 3V8ZM75.500 22 73 17H78ZM75.500 41 73 46H78Z" fill="#451b78" />
      </g>
      <g stroke="#555">
        <path d="M2 36 8 28M2 44 8 36M3 50 14 40M3 60 20 42M9 62 20 50M17 63 20 58M45 50 54 41M45 60 60 41M51 62 62 48M58 63 62 57M57 32 62 25M57 38 62 32M57 28 60 24" />
      </g>
      <path d="M1 64V22.500H62V64M8 22V39.500H55V22M19.500 39V64M44.500 39V64" stroke="#111" strokeWidth="2" />
      <path d="M32.500 17V64" stroke="#111" strokeDasharray="14 2 2 2" />
      <g fill="#ff751f" fontSize="14" fontWeight="500">
        <text x="23" y="12">D2</text>
        <text x="67" y="37">H2</text>
      </g>
    </svg>
  );
}

const field = 'border border-[#b5bcc5] bg-white';

function HolePanel() {
  return (
    <aside className="relative flex w-[471px] shrink-0 text-[#111]">
      <SideTabs />
      <div className="mb-px flex min-w-0 flex-1 flex-col border-b border-l border-[#b9c0c9] pt-0.5 pl-0.5">
        <div className="flex gap-0.5">
          <button type="button" aria-label="确定" className={`flex h-6 w-7 items-center justify-center ${field}`}>
            <svg viewBox="0 0 16 16" className="size-4">
              <path d="M0 8 3 5 7 9 13 2 16 4 7 15Z" fill="#3fc13b" stroke="#2a9530" strokeWidth=".7" />
            </svg>
          </button>
          <button type="button" aria-label="取消" className={`flex h-6 w-7 items-center justify-center ${field}`}>
            <svg viewBox="0 0 16 16" className="size-4">
              <path d="M3 0 8 5 13 0 16 3 11 8 16 13 13 16 8 11 3 16 0 13 5 8 0 3Z" fill="#dc3c38" stroke="#a71e20" strokeWidth=".7" />
            </svg>
          </button>
          <button type="button" aria-label="应用" className={`flex h-6 w-7 items-center justify-center ${field}`}>
            <svg viewBox="0 0 16 16" className="size-4">
              <path d="M1 3H13V15H1Z" fill="#fff" stroke="#da3434" strokeWidth="2.500" />
              <path d="M4 7 7 10 15 2" fill="none" stroke="#38b735" strokeWidth="3" />
            </svg>
          </button>
          <button type="button" aria-label="预览" className={`ml-16 flex h-6 w-7 items-center justify-center ${field}`}>
            <Glyph name="eye" />
          </button>
          <button type="button" aria-label="清除" className={`flex h-6 w-7 items-center justify-center ${field}`}>
            <svg viewBox="0 0 16 16" className="size-4">
              <path d="M0 8 7 4 12 9 6 15Z" fill="#ebd583" stroke="#997d39" />
              <path d="M8 4 14 0 16 3 12 8Z" fill="#3c4967" />
            </svg>
          </button>
        </div>

        <div className="mt-1 ml-0.5 flex min-h-0 flex-1 flex-col gap-[3px] overflow-hidden">
          <section className="h-[108px] shrink-0 border border-[#b9c0c9] bg-[#dee3ea]">
            <TriangleHeader>必选</TriangleHeader>
            <div className="mt-[9px] ml-[49px] flex gap-px">
              {[0, 1, 2, 3].map((i) => (
                <button
                  type="button"
                  key={i}
                  aria-label={`孔类型 ${i + 1}`}
                  className={`flex size-9 items-center justify-center border ${i === 0 ? 'border-[#d09c2e] bg-[#ffe27a]' : 'border-[#b5bcc5] bg-[#fcfdfd]'}`}
                >
                  <HoleIcon index={i} />
                </button>
              ))}
            </div>
            <label className="mt-1.5 ml-2 flex items-center">
              <span className="w-20">位置</span>
              <input type="text" className="h-6 w-[93px] border border-[#0a84ff] bg-white" />
              <Glyph name="chevrons" />
            </label>
          </section>

          <section className="h-[102px] shrink-0 border border-[#b9c0c9] bg-[#dee3ea]">
            <TriangleHeader>孔对齐</TriangleHeader>
            <div className="mt-1 ml-2 flex items-center">
              <label className="flex items-center">
                <span className="w-[86px]">方向</span>
                <input type="text" className={`mr-1 h-[22px] w-[58px] ${field}`} />
              </label>
              <Glyph name="chevrons" />
              <Glyph name="swapDir" className="ml-2 size-4" />
            </div>
            <label className="mt-[5px] ml-2 flex h-4 items-center gap-[5px]">
              <span className="grid">
                <input type="checkbox" defaultChecked className="peer col-start-1 row-start-1 size-[13px] appearance-none border border-[#7e878f] bg-[#e9edf1]" />
                <svg viewBox="0 0 13 13" className="pointer-events-none invisible col-start-1 row-start-1 size-[13px] peer-checked:visible" fill="none" stroke="#42628c" strokeWidth="2">
                  <path d="M3 6 5.500 9 10 3" />
                </svg>
              </span>
              投影位置点
            </label>
            <label className="mt-[5px] ml-2 flex items-center">
              <span className="w-[86px]">定位面</span>
              <input type="text" className={`h-[22px] w-32 ${field}`} />
            </label>
          </section>

          <section className="h-20 shrink-0 border border-[#b9c0c9] bg-[#dee3ea]">
            <TriangleHeader>布尔运算</TriangleHeader>
            <label className="mt-[5px] ml-2 flex items-center">
              <span className="w-[79px]">操作</span>
              <select className={`h-[21px] w-40 appearance-none pl-0.5 ${field}`}>
                <option>移除</option>
              </select>
            </label>
            <label className="mt-1 ml-2 flex items-center">
              <span className="w-[79px]">造型</span>
              <input type="text" className={`mr-0.5 h-[22px] w-[101px] ${field}`} />
              <Glyph name="chevrons" />
            </label>
          </section>

          <section className="min-h-0 flex-1 border border-b-0 border-[#b9c0c9] bg-[#dee3ea]">
            <TriangleHeader>孔规格</TriangleHeader>
            <label className="mt-[5px] ml-2 flex items-center">
              <span className="w-[79px]">孔造型</span>
              <select className={`h-[21px] w-40 appearance-none pl-0.5 ${field}`}>
                <option>台阶孔</option>
              </select>
            </label>
            <div className="mt-[5px] ml-2 border-t border-l border-[#b9c0c9]">
              <TriangleHeader>规格</TriangleHeader>
              <div className="h-[71px] overflow-hidden pt-2.5">
                <HoleDiagram />
              </div>
            </div>
          </section>
        </div>

        <div className="mr-[230px] mb-[3px] flex h-4 shrink-0 items-center bg-[#e8ebef]">
          <svg viewBox="0 0 5 8" className="mx-1.5 h-2 w-[5px]">
            <path d="M5 0V8L0 4Z" fill="#4b535d" />
          </svg>
          <div className="flex h-[15px] flex-1 items-center justify-center gap-px border border-r-0 border-[#8d98a6] bg-[#eef0f3] pl-2">
            {[0, 1, 2, 3].map((i) => (
              <span key={i} className="h-2 w-px bg-[#8a929b]" />
            ))}
          </div>
        </div>
      </div>
    </aside>
  );
}

function ViewBar() {
  const views = ['cube', 'cubeWire', 'swapView', 'zoomBox', 'target'];
  return (
    <div className="flex h-[27px] items-center">
      <span className="w-[65px]" />
      <ToolButton name="padGhost" />
      <ToolButton name="pad" />
      <Caret />
      <span className="w-[7px]" />
      <ToolButton name="pencil" />
      <ToolButton name="cubeLayer" />
      {views.map((v) => (
        <div key={v} className="flex w-[37px] shrink-0 items-center">
          <ToolButton name={v} />
          <Caret />
        </div>
      ))}
      <ToolButton name="windowBox" />
      <div className="mr-px flex h-[23px] w-9 shrink-0 items-center border border-[#d09c2e] bg-[#ffe27a]">
        <button type="button" aria-label="基准面显示" className="flex h-full w-6 items-center justify-center border-r border-[#d09c2e]">
          <Glyph name="datum" />
        </button>
        <span className="w-0.5" />
        <Caret />
      </div>
      <div className="flex w-[37px] shrink-0 items-center">
        <ToolButton name="tree" />
        <Caret />
      </div>
      <span className="mx-1 h-[7px] w-4 shrink-0 border border-[#777] bg-black" />
      <span className="mx-[5px] size-4 shrink-0 border border-[#173e86] bg-[#ff9900]" />
      <div className="flex w-[37px] shrink-0 items-center">
        <ToolButton name="section" />
        <Caret />
      </div>
      <div className="ml-px flex h-[22px] w-[115px] shrink-0 items-center border border-[#ced3d8] bg-[#eeefef] px-1.5">
        <svg viewBox="0 0 32 16" className="h-4 w-8 shrink-0" fill="#f3f3f3" stroke="#a5a9ac">
          <path d="M3 10Q0 7 2 3 5 0 8 3T7 10V14H3Z" />
          <circle cx="23" cy="8" r="6" fill="#dbdcdc" />
        </svg>
        <select disabled aria-label="图层" className="min-w-0 flex-1 appearance-none text-[#777]">
          <option>图层0000</option>
        </select>
        <Caret className="text-[#aaa]" />
      </div>
    </div>
  );
}

// one counterbored hole of the base plate, seen at an angle
function PlateHole({ x, y, id, floor }: { x: number; y: number; id: string; floor: string }) {
  return (
    <g transform={`translate(${x} ${y})`} stroke="#111" strokeWidth="3">
      <clipPath id={`${id}a`}>
        <ellipse rx="78" ry="66" />
      </clipPath>
      <clipPath id={`${id}b`}>
        <ellipse cx="-2" cy="21" rx="52" ry="43" />
      </clipPath>
      <ellipse rx="78" ry="66" fill="url(#bore)" />
      <g clipPath={`url(#${id}a)`}>
        <ellipse cy="22" rx="78" ry="66" fill="#df8a0c" />
        <ellipse cx="-2" cy="21" rx="52" ry="43" fill="url(#bore)" />
        <g clipPath={`url(#${id}b)`}>
          <ellipse cx="-4" cy="56" rx="50" ry="42" fill={floor} />
        </g>
      </g>
      <ellipse rx="78" ry="66" fill="none" />
    </g>
  );
}

function BracketModel() {
  return (
    <svg viewBox="0 0 1320 1110" className="absolute top-[66px] left-[29px] h-[370px] w-[440px]" strokeLinejoin="round">
      <defs>
        <linearGradient id="bore">
          <stop offset="0" stopColor="#9a5c00" />
          <stop offset=".55" stopColor="#c47605" />
          <stop offset="1" stopColor="#a16000" />
        </linearGradient>
        <linearGradient id="tube">
          <stop offset="0" stopColor="#b06a00" />
          <stop offset=".2" stopColor="#c47400" />
          <stop offset=".45" stopColor="#cc7900" />
          <stop offset=".6" stopColor="#e08b0e" />
          <stop offset=".8" stopColor="#cb7900" />
          <stop offset="1" stopColor="#b56d00" />
        </linearGradient>
        <linearGradient id="arm" gradientUnits="userSpaceOnUse" x1="620" y1="260" x2="720" y2="480">
          <stop offset="0" stopColor="#dc8304" />
          <stop offset=".2" stopColor="#c57400" />
          <stop offset=".36" stopColor="#bf7810" />
          <stop offset=".6" stopColor="#b26b00" />
          <stop offset="1" stopColor="#b06900" />
        </linearGradient>
      </defs>
      <path d="M70 472 Q62 500 66 540L130 970C145 1035 200 1068 262 1065L664 1034C735 1025 776 985 776 930L778 870 133 900Z" fill="#b56d00" stroke="#111" strokeWidth="3" />
      <path d="M68 480 66 540 130 970 133 905Z" fill="#8c5400" stroke="#111" strokeWidth="3" />
      <path
        d="M188 357 590 325 740 580 745 640 780 860C780 930 730 970 664 976L280 1007C200 1005 140 965 133 910L70 472C70 410 110 362 188 357Z"
        fill="#df8a0c"
        stroke="#111"
        strokeWidth="3"
      />
      <path d="M280 1007 277 1063M666 976 663 1033" stroke="#111" strokeWidth="3" />
      <PlateHole x={199} y={467} id="h1" floor="#d8d8d8" />
      <PlateHole x={264} y={899} id="h2" floor="#b9b9b9" />
      <PlateHole x={650} y={868} id="h3" floor="#bcbcbc" />

      <path d="M948 150C950 100 1020 65 1100 65 1160 65 1205 90 1207 122L1243 370 1246 405 989 420 976 340 955 205Z" fill="url(#tube)" />
      <path d="M948 160C945 105 1020 65 1100 65 1160 65 1207 90 1207 125M948 150 955 200" fill="none" stroke="#111" strokeWidth="3" />
      <path d="M1207 125 1244 365" stroke="#111" strokeWidth="2" strokeDasharray="14 8" />
      <path
        d="M166 685C200 600 310 485 400 420 500 345 600 300 700 270 800 235 900 215 1000 201L1097 202C1040 235 976 290 977 340L982 388C890 400 755 475 740 570L742 610 748 645C700 700 450 730 330 723 230 720 160 705 166 685Z"
        fill="url(#arm)"
      />
      <path d="M166 685C160 710 230 720 330 723 450 725 700 700 748 650M738 580 741 625M990 198Q1050 188 1097 202C1040 235 976 290 977 340L982 388" fill="none" stroke="#111" strokeWidth="3" />
      <path d="M984 388 989 420" stroke="#111" strokeWidth="3" />
      <g transform="rotate(-5 1117 408)" stroke="#111" strokeWidth="3">
        <ellipse cx="1117" cy="408" rx="129" ry="71" fill="#b56d00" />
        <ellipse cx="1117" cy="408" rx="78" ry="43" fill="url(#tube)" />
      </g>

      <g fill="none" strokeWidth="3">
        <path d="M412 470 435 660M435 545 550 537 566 655M435 585 572 576 566 655" stroke="#a05e06" strokeWidth="2" />
        <path d="M372 388 384 406 396 388" stroke="#8d5a10" strokeWidth="4" />
        <path d="M425 665 402 510" stroke="#78860e" strokeWidth="5" />
        <path d="M425 665 433 565" stroke="#7d4a50" strokeWidth="6" />
        <path d="M425 665 615 652" stroke="#cf4a05" strokeWidth="5" />
        <path d="M635 650 700 646" stroke="#a86100" />
      </g>
      <path d="M392 515 400 487 410 513Z" fill="#5c7d0c" />
      <path d="M425 568 433 547 441 568Z" fill="#74434c" />
      <path d="M610 644 637 651 610 660Z" fill="#c74b08" />
      <path d="M383 438H398V452L391 460 384 452ZM428 517H443V528L436 534 429 528ZM680 640 700 646 682 654Z" fill="#8a5710" />
    </svg>
  );
}

type MenuEntry = { label: string; icon?: string; state?: 'checked' | 'on' | 'hover'; shortcut?: string };

const menuGroups: MenuEntry[][] = [
  [{ label: '从列表拾取', icon: 'cursor' }],
  [{ label: '绝对' }, { label: '关键点' }, { label: '相对' }, { label: '在实体上', icon: 'check', state: 'checked' }],
  [{ label: '表达式', icon: 'pi' }],
  [{ label: '智能点参考', icon: 'smartPick', state: 'on' }],
  [
    { label: '动态拾取', icon: 'bolt' },
    { label: '中间', icon: 'lineMid' },
    { label: '两者之间', icon: 'between' },
    { label: '偏移', icon: 'offset' },
    { label: '偏移距离', icon: 'offsetDist' },
    { label: '沿着', icon: 'along' },
    { label: '角度', icon: 'angle' },
    { label: '曲率中心', icon: 'circleCenter' },
    { label: '曲线象限点', icon: 'quadrant' },
    { label: '从两条线', icon: 'twoLines' },
    { label: '相交', icon: 'tangent' },
    { label: '投影曲线的交点', icon: 'project' },
    { label: '曲线点之间', icon: 'segment' },
    { label: '投影到曲线或曲面', icon: 'dropTo' },
    { label: '曲线/曲面相交', icon: 'planeCurve' },
    { label: '面向量', icon: 'planeVec' },
    { label: '面形心', icon: 'surface' },
    { label: '曲面上的点', icon: 'surfPoint' },
    { label: '草图点', icon: 'sketchPts' },
    { label: '草图', icon: 'sketch', state: 'hover' },
    { label: '3D草图', icon: 'sketch3d' },
    { label: '源自实体点', icon: 'fromEntity' },
    { label: '从文件输入', icon: 'fromFile' },
    { label: '取消最后一次选择', icon: 'listTeal', shortcut: 'Ctrl+Del' },
    { label: '取消全部选择', icon: 'listRed' },
    { label: '取消全部丢失项', icon: 'listRed' },
  ],
];

function MenuRow({ label, icon, state, shortcut }: MenuEntry) {
  const frame =
    state === 'checked' ? 'border border-[#f0983a] bg-[#fdf0c4]' : state === 'on' ? 'border border-[#f6b45c] bg-[#fee29a]' : '';
  return (
    <button
      type="button"
      role="menuitem"
      className={`flex h-[22px] w-full shrink-0 items-center border text-left text-[#474c57] ${state === 'hover' ? 'border-[#efc65a] bg-[#fdf0bb]' : 'border-transparent'}`}
    >
      <span className={`ml-px flex size-5 items-center justify-center ${frame}`}>{icon && <Glyph name={icon} className="size-[15px]" />}</span>
      <span className="ml-2 flex-1">{label}</span>
      <span className="pr-3.5">{shortcut}</span>
    </button>
  );
}

function PickMenu() {
  return (
    <div role="menu" className="absolute top-[3px] bottom-0 left-[240px] w-[231px] overflow-hidden border-r border-[#d5d8dc] bg-[#fdfdfd] pt-0.5 pr-0.5 pl-px shadow-[2px_0_2px_#777]">
      <span className="absolute inset-y-0 left-[25px] w-px bg-[#e2e4e7]" />
      <div className="relative flex flex-col">
        {menuGroups.map((group, i) => (
          <div key={i}>
            {i > 0 && (
              <div className="h-[9px] pt-0.5 pr-[3px] pl-[26px]">
                <hr className="border-[#9b9b9b]" />
              </div>
            )}
            {group.map((item) => (
              <MenuRow key={item.label} {...item} />
            ))}
          </div>
        ))}
      </div>
    </div>
  );
}

function Marker({ n, place }: { n: number; place: string }) {
  return (
    <span className={`absolute flex size-10 items-center justify-center rounded-full border border-[#f5dcdc] bg-[#fa4242] font-['Noto_Sans'] text-lg text-white ${place}`}>
      {n}
    </span>
  );
}

function StatusBar() {
  return (
    <footer className="flex h-[30px] shrink-0 items-center justify-end border-b-2 border-white pr-1">
      <span className="mr-[15px] h-[25px] w-px bg-[#8c9299]" />
      <button type="button" aria-label="管理器" className="flex h-[21px] w-[22px] items-center justify-center border border-[#d09c2e] bg-[#ffe27a]">
        <svg viewBox="0 0 16 16" className="size-3.5">
          <path d="M1 1H15V15H1ZM5 1V15" fill="#fff" stroke="#3477b5" strokeWidth="1.500" />
          <path d="M7 5H13M10 4V8" stroke="#555" strokeWidth="2" />
          <path d="M10 8V13" stroke="#c92e39" strokeWidth="2" />
        </svg>
      </button>
      <svg viewBox="0 0 16 16" className="ml-[9px] size-4">
        <path d="M1 2H15V11H1Z" fill="#26bfd8" stroke="#456e87" />
        <path d="M6 11H10V14H5Z" fill="#555" />
      </svg>
      <svg viewBox="0 0 16 16" className="mr-[11px] ml-[13px] size-4">
        <path d="M1.500 1.500H14.500V14.500H1.500Z" fill="#fff" stroke="#3b79c3" />
        <path d="M1 1H15V4H1Z" fill="#4f90d9" />
        <path d="M4 7H12M4 9.500H12M4 12H9" stroke="#6c93ba" />
      </svg>
      <input type="text" aria-label="命令" className="h-[22px] w-[346px] border border-[#b9c0c8] bg-white" />
    </footer>
  );
}

function ImeBar() {
  return (
    <div className="absolute top-[689px] right-1.5 flex h-[30px] w-[252px] items-center justify-between rounded-lg bg-white pr-1.5 pl-2.5 text-black shadow-[0_0_3px_#999]">
      <Glyph name="sogou" className="size-[18px] text-[#ff7418]" />
      <span className="-mr-1 -ml-1.5 h-[18px] w-px bg-[#ccc]" />
      <span className="text-lg leading-none font-medium">中</span>
      <svg viewBox="0 0 14 16" className="h-4 w-3.5">
        <circle cx="4" cy="5" r="2" fill="none" stroke="#111" strokeWidth="1.500" />
        <path d="M8 9H11V12L9 15H8L9 12H8Z" />
      </svg>
      <Glyph name="mic" className="size-[18px]" />
      <svg viewBox="0 0 18 18" className="size-[18px]" fill="none" stroke="#111" strokeWidth="1.800">
        <rect x="1.500" y="2" width="15" height="14" rx="2" />
        <path d="M4 6H14M4 9.500H14" strokeDasharray="1.700 1.500" />
        <path d="M6 13H12" />
      </svg>
      <svg viewBox="0 0 18 18" className="size-[18px]">
        <path d="M5 1Q9 4 13 1L18 4 16 9 14 8V17H4V8L2 9 0 4Z" fill="#ff6332" />
      </svg>
      <svg viewBox="0 0 18 18" className="size-[18px]" fill="none" stroke="#111" strokeWidth="2">
        <rect x="2" y="2" width="5" height="5" rx="1" />
        <circle cx="13.500" cy="4.500" r="2.700" />
        <rect x="2" y="11" width="5" height="5" rx="1" />
        <rect x="11" y="11" width="5" height="5" rx="1" />
      </svg>
      <svg viewBox="0 0 22 22" className="size-[22px]">
        <circle cx="10" cy="12" r="9" fill="#fbf3ef" stroke="#ecd8d2" />
        <path d="M1 8Q7 5 14 7L15 12 2 13Z" fill="#e75f25" />
        <path d="M3 9H7V12H3ZM9 9H13V11H9ZM4 17Q8 19 11 15" fill="#43221a" />
        <path d="M18 4 19 7 22 8 19 9 18 12 17 9 14 8 17 7Z" fill="#ffdd42" />
      </svg>
    </div>
  );
}

function NetWidget() {
  return (
    <div className="absolute top-[407px] right-0 flex h-[142px] w-[33px] flex-col items-center rounded-l-lg bg-[#919499] pt-2.5 font-['Noto_Sans'] text-white shadow-[0_1px_3px_#888]">
      <span className="size-3 rounded-full border border-[#397aa2] bg-[#00c05f]" />
      <span className="mt-3.5 h-px w-6 bg-[#84878c]" />
      <span className="mt-1.5 h-[30px] w-2.5 rounded-full bg-[linear-gradient(#a7a9ae_25%,#eb923b_26%,#cbbd3a_60%,#32bdaa)]" />
      <div className="mt-[11px] text-center text-[11px] leading-[11px] text-[#e2e3e5]">
        <div className="text-white">0.0</div>
        <div className="flex items-center gap-1 text-[10px]">
          <svg viewBox="0 0 6 8" className="h-2 w-1.5">
            <path d="M0 4 3 0 6 4H4V8H2V4Z" fill="#27a8ef" />
          </svg>
          K/s
        </div>
        <div className="mt-[5px] text-white">0.0</div>
        <div className="flex items-center gap-1 text-[10px]">
          <svg viewBox="0 0 6 8" className="h-2 w-1.5">
            <path d="M0 4 3 8 6 4H4V0H2V4Z" fill="#10b967" />
          </svg>
          K/s
        </div>
      </div>
    </div>
  );
}

function Taskbar() {
  return (
    <div className="flex h-[43px] shrink-0 items-center bg-[#d3dfe9] pt-1 text-[#1c242c]">
      <div className="flex flex-1 items-center gap-7 pl-5">
        <svg viewBox="0 0 24 24" className="size-6">
          <path d="M1 1H11.500V11.500H1ZM12.500 1H23V11.500H12.500ZM1 12.500H11.500V23H1ZM12.500 12.500H23V23H12.500Z" fill="#147fd3" />
        </svg>
        <svg viewBox="0 0 24 24" className="size-6 overflow-visible">
          <circle cx="12" cy="13" r="9" fill="#55b82c" />
          <path d="M17 16A5.500 5.500 0 1 1 17.500 12H7" fill="none" stroke="#fff" strokeWidth="2.500" />
          <path d="M2 22Q7 23 17 12 23 3 18 1 14 1 9 5" fill="none" stroke="#7ccb43" strokeWidth="1.800" />
          <path d="M10 28.500H15" stroke="#7a838b" strokeWidth="2.500" strokeLinecap="round" />
        </svg>
        <svg viewBox="0 0 24 24" className="size-6 overflow-visible">
          <path d="M0 2Q0 1 1 1H8L10 4H24V22H0Z" fill="#e9a51c" />
          <path d="M0 6H24V22H0Z" fill="#ffd04d" />
          <path d="M4 22V16H20V22Z" fill="#1380cc" />
          <path d="M10 28.500H15" stroke="#7a838b" strokeWidth="2.500" strokeLinecap="round" />
        </svg>
        <svg viewBox="0 0 24 24" className="size-6 overflow-visible">
          <circle cx="12" cy="12" r="11" fill="#2b8eee" />
          <path d="M17 16A6 6 0 1 1 18 11.500H7" fill="none" stroke="#fff" strokeWidth="3" />
          <path d="M10 28.500H15" stroke="#7a838b" strokeWidth="2.500" strokeLinecap="round" />
        </svg>
        <svg viewBox="0 0 24 24" className="size-6">
          <ellipse cx="10" cy="9" rx="9" ry="7" fill="#25c765" />
          <circle cx="7" cy="7" r="1.500" fill="#19743f" />
        </svg>
      </div>
      <div className="flex items-center font-['Noto_Sans','Noto_Sans_CJK_SC']">
        <svg viewBox="0 0 12 8" className="mr-3.5 h-2 w-3" fill="none" stroke="#222" strokeWidth="1.500">
          <path d="M1 7 6 1 11 7" />
        </svg>
        <Glyph name="keyboard" className="mr-3.5 size-[18px]" />
        <Glyph name="mic" className="mr-[15px] size-4 text-[#27599b]" />
        <span className="mr-6 text-sm">中</span>
        <span className="mr-5 flex size-4 -rotate-6 items-center justify-center rounded-sm bg-[#ee4f2e] text-white">
          <Glyph name="sogou" className="size-3" />
        </span>
        <svg viewBox="0 0 64 16" className="mr-2 h-4 w-16" fill="none" stroke="#20262b" strokeWidth="1.300">
          <path d="M1 6Q8-1 15 6M3 8.500Q8 3 13 8.500M5.500 11Q8 8.500 10.500 11" />
          <circle cx="8" cy="13" r="1" fill="#20262b" />
          <path d="M24 6H27L31 2V14L27 10H24ZM33 5Q35 8 33 11M35.500 3Q39 8 35.500 13" />
          <path d="M49 6H61V13H49ZM61 8H63V11H61ZM51 2V6M54 2V6" />
          <path d="M50 7H57V12H50Z" fill="#20262b" />
        </svg>
        <div className="w-[61px] text-right text-[11px] leading-4">
          <div>11:05</div>
          <div>2025/1/26</div>
        </div>
        <span className="mr-5 ml-2 flex size-4 items-center justify-center rounded-full bg-[#1777bd] text-[11px] text-white">1</span>
      </div>
    </div>
  );
}

export default function App() {
  return (
    <div className="relative flex h-screen flex-col overflow-hidden bg-[#e1e5e9] font-['Roboto','Noto_Sans_CJK_SC',sans-serif] text-xs leading-4">
      <svg className="absolute size-0" aria-hidden="true">
        <defs>
          <linearGradient id="cyan" x2="1" y2="1">
            <stop stopColor="#63cdec" />
            <stop offset=".5" stopColor="#1592bf" />
            <stop offset="1" stopColor="#0b577b" />
          </linearGradient>
          <linearGradient id="drum">
            <stop stopColor="#0c658b" />
            <stop offset=".35" stopColor="#3fc0e6" />
            <stop offset="1" stopColor="#07506f" />
          </linearGradient>
          <linearGradient id="hole" x2="0" y2="1">
            <stop stopColor="#0a6d92" />
            <stop offset="1" stopColor="#24c5e8" />
          </linearGradient>
          <linearGradient id="steel" x2="0" y2="1">
            <stop stopColor="#999" />
            <stop offset=".4" stopColor="#e0e0e0" />
            <stop offset="1" stopColor="#737373" />
          </linearGradient>
        </defs>
      </svg>

      <TitleRow />
      <TabRow />
      <Ribbon />
      <SelectionBar />

      <div className="flex h-5 shrink-0 items-center text-[#333]">
        <div className="w-[478px] pl-[5px]">孔</div>
        <svg viewBox="0 0 10 10" className="size-2.5" stroke="#8b9197" strokeWidth="1.500">
          <path d="M5 0V10M0 5H10" />
        </svg>
        <svg viewBox="0 0 8 8" className="mr-1.5 ml-auto size-2" fill="#737980">
          <path d="M0 0H8V1.500H0ZM0 3.500H8L4 7.500Z" />
        </svg>
      </div>

      <div className="flex min-h-0 flex-1">
        <HolePanel />
        <main className="relative min-w-0 flex-1 border-t border-b border-[#b9c0c8] bg-linear-to-b from-white to-[#9e9e9e]">
          <ViewBar />
          <p className="pointer-events-none absolute top-1 left-0 text-[11px] whitespace-nowrap text-black">一个有效的过滤器设置.</p>
          <BracketModel />
        </main>
      </div>

      <StatusBar />
      <Taskbar />

      <PickMenu />
      <NetWidget />
      <ImeBar />
      <Marker n={1} place="top-[295px] left-[184px]" />
      <Marker n={2} place="top-[601px] left-[382px]" />
      <span className="absolute top-[587px] left-[236px] h-[71px] w-[115px] border-2 border-[#f00]" />
      <span className="pointer-events-none absolute right-1 bottom-1 font-['Noto_Sans','Noto_Sans_CJK_SC'] text-[26px] leading-9 whitespace-nowrap text-white/75 [text-shadow:1px_1px_1px_#8888]">
        CSDN @山涧果子
      </span>
    </div>
  );
}
